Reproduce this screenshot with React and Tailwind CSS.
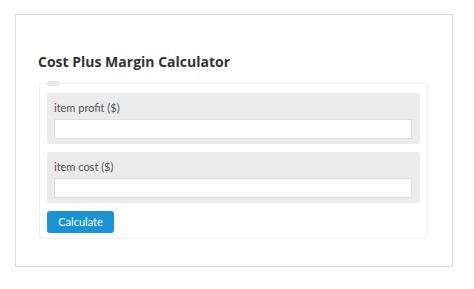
import React from "react";

const Field = ({ label }) => {
  return (
    <div className="bg-[#ebebeb] rounded-[3px] pt-[7px] pb-[5px] pl-[7px] pr-[8px]">
      <label className="block h-[16px] leading-[16px] mb-[3px] text-[11px] text-[#555]">{label}</label>
      <input type="text" className="block w-full h-[20px] bg-white border border-[#dedede] outline-none" />
    </div>
  );
};

export default function App() {
  return (
    <div className="bg-white min-h-screen pt-[14px] px-[15px] font-['Lato',sans-serif]">
      <div className="border border-[#dcdcdc] w-[438px] pt-[36px] pb-[27px]">
        <h1 className="ml-[22px] text-[14px] leading-[22px] font-bold text-[#333] font-['Open_Sans',sans-serif]">
          Cost Plus Margin Calculator
        </h1>
        <fieldset className="mt-[8px] ml-[23px] mr-[24px] border border-[#f0f0f0] rounded-[3px] px-[7px] pb-[5px]">
          <legend className="w-[13px] h-[5px] bg-[#e6e6e6] rounded-full"></legend>
          <div className="flex flex-col gap-[8px] pt-[7px]">
            <Field label="item profit ($)" />
            <Field label="item cost ($)" />
            <button className="block bg-[#1a93d6] text-white text-[11px] leading-[22px] w-[67px] h-[22px] rounded-[3px]">
              Calculate
            </button>
          </div>
        </fieldset>
      </div>
    </div>
  );
}
